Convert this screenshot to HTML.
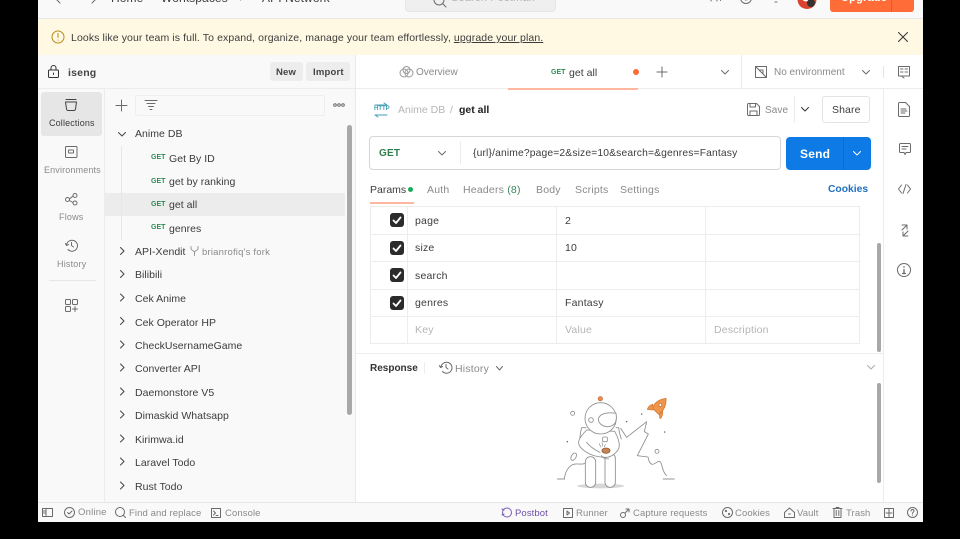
<!DOCTYPE html>
<html><head><meta charset="utf-8"><style>
html,body{margin:0;padding:0;width:960px;height:539px;overflow:hidden;background:#000}
body{font-family:"Liberation Sans",sans-serif;color:#3a3a3a}
.t{position:absolute;white-space:nowrap;font-size:10.5px;line-height:14px;margin-top:2px;transform:translateY(-50%);letter-spacing:.2px;color:#3c3c3c}
.s{letter-spacing:.03px;margin-top:3px}
.n{margin-top:3px}
.g{color:#8a8a8a}.l{color:#b5b5b5}
.f{font-size:9.5px;letter-spacing:.1px;margin-top:3px}
.b{position:absolute;background:#ededed}
.get{font-size:7px;font-weight:700;color:#2e8b57;letter-spacing:0;margin-top:3px}
svg{position:absolute;overflow:visible;fill:none;stroke:#6b6b6b;stroke-width:1;stroke-linecap:round;stroke-linejoin:round}
.cb{position:absolute;width:14px;height:14px;background:#2b2b2b;border-radius:3px}
.cb svg{left:0;top:0;stroke:#fff;stroke-width:1.8}
</style></head><body>
<div style="position:absolute;left:38px;top:0;width:885px;height:522px;background:#fff;overflow:hidden" id="r">
<div class="b" style="left:0;top:0;width:885px;height:19px;background:#f9f9f9"></div>
<div class="b" style="left:0;top:18px;width:885px;height:1px;background:#e6e6e6"></div>
<div class="b" style="left:0;top:19px;width:885px;height:36px;background:#fff9e3"></div>
<div class="b" style="left:0;top:55px;width:318px;height:447px;background:#f9f9f9"></div>
<div class="b" style="left:0;top:88px;width:885px;height:1px;background:#ececec"></div>
<div class="b" style="left:317px;top:55px;width:1px;height:447px;background:#e9e9e9"></div>
<div class="b" style="left:66px;top:88px;width:1px;height:414px;background:#ececec"></div>
<div class="b" style="left:845px;top:89px;width:1px;height:413px;background:#ececec"></div>
<div class="b" style="left:703px;top:55px;width:1px;height:33px;background:#ececec"></div>
<div class="b" style="left:0;top:502px;width:885px;height:20px;background:#f9f9f9"></div>
<div class="b" style="left:0;top:502px;width:885px;height:1px;background:#e6e6e6"></div>
<div class="b" style="left:367px;top:0;width:151px;height:12px;box-sizing:border-box;background:#efefef;border-radius:0 0 4px 4px;border:1px solid #e6e6e6;border-top:0"></div>
<svg style="left:18px;top:-4px" width="6" height="8"><path d="M4 0L.5 3.500 4 7"/></svg>
<svg style="left:53px;top:-4px" width="6" height="8"><path d="M1 0l3.500 3.500L1 7"/></svg>
<span class="t" style="left:73px;top:-4px;font-size:12px;letter-spacing:.1px">Home</span>
<span class="t" style="left:123px;top:-4px;font-size:12px;letter-spacing:.1px">Workspaces</span>
<svg style="left:199px;top:-3px" width="7" height="5"><path d="M.5.500L3.500 3 6.500.500"/></svg>
<span class="t" style="left:224px;top:-4px;font-size:12px;letter-spacing:.1px">API Network</span>
<span class="t l" style="left:413px;top:-4px;font-size:11px">Search Postman</span>
<svg style="left:395px;top:-6px" width="14" height="14"><circle cx="6" cy="6" r="5"/><path d="M10 10l3 3"/></svg>
<svg style="left:672px;top:-5px" width="14" height="10"><path d="M1 6c1-5 5-5 6 0M8 3h5M10.500.5v5" /><circle cx="4" cy="-1" r="2.500"/></svg>
<svg style="left:702px;top:-6px" width="12" height="10"><circle cx="6" cy="4" r="5.500"/><circle cx="6" cy="4" r="2"/></svg>
<svg style="left:732px;top:-5px" width="12" height="10"><path d="M1.500 4.500c2-1 2-8 4.500-8s2.500 7 4.500 8zM5 7h2"/></svg>
<svg style="left:759px;top:-9px" width="20" height="20"><circle cx="10" cy="8.500" r="9.500" fill="#d9432f" stroke="none"/><circle cx="9" cy="6" r="4.500" fill="#fff" stroke="none"/><circle cx="14" cy="12" r="4" fill="#333" stroke="none"/></svg>
<div class="b" style="left:792px;top:-5px;width:84px;height:17px;background:#ff6c37;border-radius:3px"></div>
<div class="b" style="left:853px;top:0;width:1px;height:12px;background:#e25a28"></div>
<span class="t" style="left:803px;top:-4px;color:#fff;font-weight:700;font-size:11px">Upgrade</span>
<svg style="left:13px;top:30px;stroke:#b58a1b" width="14" height="14"><circle cx="7" cy="7" r="6"/><path d="M7 3.500v4M7 10v.3"/></svg>
<span class="t" style="left:33px;top:36px;font-size:10.5px;letter-spacing:.1px">Looks like your team is full. To expand, organize, manage your team effortlessly, <u>upgrade your plan.</u></span>
<svg style="left:860px;top:32px;stroke:#333" width="10" height="10"><path d="M.5.500l9 9M9.500.500l-9 9"/></svg>
<svg style="left:10px;top:65px;stroke:#333" width="12" height="13"><rect x=".5" y="5" width="10" height="7.500" rx="1"/><path d="M3 5V3a2.500 2.500 0 015 0v2M5.500 8v1.500"/></svg>
<span class="t n" style="left:30px;top:70px;font-weight:700;color:#444">iseng</span>
<div class="b" style="left:232px;top:62px;width:33px;height:19px;border-radius:3px"></div>
<div class="b" style="left:268px;top:62px;width:44px;height:19px;border-radius:3px"></div>
<span class="t n" style="left:238px;top:70px;font-weight:700;font-size:9.500px;color:#444">New</span>
<span class="t n" style="left:275px;top:70px;font-weight:700;font-size:9.500px;color:#444">Import</span>
<svg style="left:361px;top:66px;stroke:#999" width="15" height="12"><circle cx="5" cy="7" r="4"/><circle cx="10" cy="7" r="4"/><circle cx="7.500" cy="4" r="3.500"/></svg>
<span class="t g" style="left:378px;top:71px;font-size:10px;letter-spacing:0">Overview</span>
<div class="b" style="left:470px;top:88px;width:130px;height:2px;background:#ffb7a0"></div>
<span class="t get" style="left:513px;top:70px">GET</span>
<span class="t s" style="left:531px;top:70px">get all</span>
<div class="b" style="left:595px;top:69px;width:6px;height:6px;border-radius:50%;background:#ff6c37"></div>
<svg style="left:619px;top:67px" width="10" height="10"><path d="M5 0v10M0 5h10"/></svg>
<svg style="left:683px;top:70px" width="8" height="5"><path d="M.5.500L4 4 7.500.500"/></svg>
<svg style="left:717px;top:66px" width="12" height="12"><rect x=".5" y=".5" width="11" height="11"/><path d="M1 1l10 10M4 4h4v4"/></svg>
<span class="t g" style="left:736px;top:71px;font-size:10px;letter-spacing:0">No environment</span>
<svg style="left:824px;top:70px" width="8" height="5"><path d="M.5.500L4 4 7.500.500"/></svg>
<div class="b" style="left:845px;top:66px;width:1px;height:12px;background:#e3e3e3"></div>
<svg style="left:860px;top:66px" width="12" height="12"><rect x=".5" y=".5" width="11" height="9.500"/><path d="M2.500 3h2.500M7 3h2.500M2.500 6h2.500M7 6h2.500M4 10.500l2 1.500"/></svg>
<div class="b" style="left:3px;top:92px;width:61px;height:44px;background:#e6e6e6;border-radius:3px"></div>
<svg style="left:27px;top:99px;stroke:#444" width="12" height="12"><path d="M1 .5h10M.5 3h11l-1 7c0 1-1 1.500-1.500 1.500H3c-.5 0-1.500-.5-1.500-1.500z"/></svg>
<span class="t n" style="left:11px;top:120px;font-size:9px;letter-spacing:.15px">Collections</span>
<svg style="left:27px;top:146px" width="13" height="12"><rect x=".5" y=".5" width="11.500" height="11" rx="1"/><rect x="3.500" y="4" width="5" height="3" rx=".5"/></svg>
<span class="t g n" style="left:6px;top:167px;font-size:9px;letter-spacing:.15px">Environments</span>
<svg style="left:27px;top:193px" width="13" height="13"><circle cx="2.500" cy="6.500" r="2"/><circle cx="10" cy="2.500" r="2"/><circle cx="10" cy="10" r="2"/><path d="M4.500 6l3.500-3M4.500 7.500L8 9.500"/></svg>
<span class="t g n" style="left:21px;top:214px;font-size:9px">Flows</span>
<svg style="left:27px;top:239px" width="13" height="13"><path d="M1.500 6.500a5.500 5.500 0 111.500 4M.5 4.500l1 2 2-1M6.500 3.500v3l2 1.500"/></svg>
<span class="t g n" style="left:19px;top:261px;font-size:9px">History</span>
<div class="b" style="left:11px;top:280px;width:47px;height:1px;background:#e6e6e6"></div>
<svg style="left:27px;top:299px" width="13" height="13"><rect x=".5" y=".5" width="5" height="5" rx="1"/><rect x="7.500" y=".5" width="5" height="5" rx="1"/><rect x=".5" y="7.500" width="5" height="5" rx="1"/><path d="M10 7.500v5M7.500 10h5"/></svg>
<svg style="left:78px;top:100px" width="11" height="11"><path d="M5.500 0v11M0 5.500h11"/></svg>
<div class="b" style="left:97px;top:95px;width:190px;height:21px;box-sizing:border-box;background:#f9f9f9;border:1px solid #eee;border-radius:2px"></div>
<svg style="left:107px;top:100px" width="12" height="11"><path d="M0 .5h12M2 3.500h8M3.500 6.500h5M5 9.500h2"/></svg>
<svg style="left:295px;top:103px" width="12" height="4"><circle cx="2" cy="2" r="1.300"/><circle cx="6" cy="2" r="1.300"/><circle cx="10" cy="2" r="1.300"/></svg>
<div class="b" style="left:67px;top:193px;width:240px;height:23px;background:#ececec"></div>
<div class="b" style="left:309px;top:125px;width:5px;height:290px;background:#a8a8a8;border-radius:2.500px"></div>
<div class="b" style="left:83px;top:146px;width:1px;height:94px;background:#e6e6e6"></div>
<svg style="left:80px;top:132px;stroke:#444" width="8" height="5"><path d="M.5.500L4 4 7.500.500"/></svg>
<span class="t s" style="left:97px;top:131px">Anime DB</span>
<span class="t get" style="left:113px;top:155px">GET</span><span class="t s" style="left:131px;top:156px">Get By ID</span>
<span class="t get" style="left:113px;top:179px">GET</span><span class="t s" style="left:131px;top:179px">get by ranking</span>
<span class="t get" style="left:113px;top:202px">GET</span><span class="t s" style="left:131px;top:202px">get all</span>
<span class="t get" style="left:113px;top:225px">GET</span><span class="t s" style="left:131px;top:226px">genres</span>
<span class="t s" style="left:97px;top:249px">API-Xendit</span>
<svg style="left:152px;top:246px;stroke:#999" width="9" height="10"><path d="M1 .5v2c0 2 3.500 2 3.500 4v3M8 .5v2c0 2-3.500 2-3.500 4"/></svg>
<span class="t g n" style="left:164px;top:250px;font-size:9.500px">brianrofiq's fork</span>
<span class="t s" style="left:97px;top:272px">Bilibili</span>
<span class="t s" style="left:97px;top:296px">Cek Anime</span>
<span class="t s" style="left:97px;top:320px">Cek Operator HP</span>
<span class="t s" style="left:97px;top:343px">CheckUsernameGame</span>
<span class="t s" style="left:97px;top:366px">Converter API</span>
<span class="t s" style="left:97px;top:390px">Daemonstore V5</span>
<span class="t s" style="left:97px;top:413px">Dimaskid Whatsapp</span>
<span class="t s" style="left:97px;top:437px">Kirimwa.id</span>
<span class="t s" style="left:97px;top:460px">Laravel Todo</span>
<span class="t s" style="left:97px;top:484px">Rust Todo</span>
<svg style="left:82px;top:247px;stroke:#444" width="5" height="240"><path d="M.5.500L4 4 .5 7.500M.5 23.500L4 27 .5 30.500M.5 47L4 50.500 .5 54M.5 70.500L4 74 .5 77.500M.5 94L4 97.500 .5 101M.5 117L4 120.500 .5 124M.5 141L4 144.500 .5 148M.5 164L4 167.500 .5 171M.5 188L4 191.500 .5 195M.5 211L4 214.500 .5 218M.5 235L4 238.500 .5 242"/></svg>
<svg style="left:336px;top:103px;stroke:#3f9fb5" width="14" height="14"><path d="M1 2h12M10 0l3 2M1 12h12M1 12l3 2"/></svg>
<span class="t" style="left:336px;top:107px;font-size:6px;font-weight:700;color:#3f9fb5;letter-spacing:0">HTTP</span>
<span class="t l n" style="left:360px;top:107px;letter-spacing:0">Anime DB</span>
<span class="t l n" style="left:412px;top:107px">/</span>
<span class="t n" style="left:421px;top:107px;font-weight:700;color:#222;letter-spacing:0">get all</span>
<svg style="left:709px;top:103px" width="13" height="13"><path d="M.5 1.500a1 1 0 011-1h8l3 3v8a1 1 0 01-1 1h-10a1 1 0 01-1-1zM3 .5v3.500h5.500V.5M3 12.500V8h7v4.500"/></svg>
<span class="t g n" style="left:727px;top:108px;font-size:10px;letter-spacing:.1px">Save</span>
<div class="b" style="left:756px;top:96px;width:1px;height:27px;background:#ececec"></div>
<svg style="left:763px;top:107px;stroke:#333" width="8" height="5"><path d="M.5.500L4 4 7.500.500"/></svg>
<div class="b" style="left:784px;top:96px;width:48px;height:27px;box-sizing:border-box;background:#fff;border:1px solid #e3e3e3;border-radius:3px"></div>
<span class="t n" style="left:794px;top:107px;font-size:10.500px;letter-spacing:.1px">Share</span>
<svg style="left:860px;top:102px" width="12" height="15"><path d="M.5 1.500a1 1 0 011-1h6l4 4v9a1 1 0 01-1 1h-9a1 1 0 01-1-1zM3 7h5M3 9h6M3 11h4"/></svg>
<div class="b" style="left:331px;top:136px;width:412px;height:34px;box-sizing:border-box;background:#fff;border:1.5px solid #d6d6d6;border-radius:4px"></div>
<div class="b" style="left:422px;top:141px;width:1px;height:23px;background:#ececec"></div>
<span class="t" style="left:341px;top:152px;font-weight:700;font-size:10px;color:#2e7d4f">GET</span>
<svg style="left:400px;top:151px" width="8" height="5"><path d="M.5.500L4 4 7.500.500"/></svg>
<span class="t" style="left:435px;top:152px;font-size:10.300px;letter-spacing:.15px">{url}/anime?page=2&amp;size=10&amp;search=&amp;genres=Fantasy</span>
<div class="b" style="left:748px;top:137px;width:85px;height:33px;background:#0e7ae6;border-radius:4px"></div>
<div class="b" style="left:805px;top:137px;width:1px;height:33px;background:#0b6dce"></div>
<span class="t" style="left:762px;top:152px;color:#fff;font-weight:700;font-size:12px">Send</span>
<svg style="left:815px;top:151px;stroke:#fff" width="8" height="5"><path d="M.5.500L4 4 7.500.500"/></svg>
<svg style="left:861px;top:143px" width="12" height="13"><path d="M1.500.5h9a1 1 0 011 1v7a1 1 0 01-1 1H7l-1 2-1-2H1.500a1 1 0 01-1-1v-7a1 1 0 011-1zM3 3.500h6M3 6h4"/></svg>
<svg style="left:860px;top:184px" width="13" height="10"><path d="M3.500 1L.5 5l3 4M9.500 1l3 4-3 4M8 .5L5 9.500"/></svg>
<svg style="left:862px;top:224px" width="10" height="13"><path d="M2 1h5v4M7 1L2 6M8 12H3V8M3 12l5-5"/></svg>
<svg style="left:859px;top:263px" width="14" height="14"><circle cx="7" cy="7" r="6.500"/><path d="M7 6.500v3.500M7 3.800v.4M5.500 10.500h3" stroke-width="1.300"/></svg>
<span class="t" style="left:332px;top:188px;letter-spacing:0">Params</span>
<div class="b" style="left:370px;top:187px;width:5px;height:5px;border-radius:50%;background:#1ea85e"></div>
<div class="b" style="left:332px;top:202px;width:44px;height:2px;background:#ffb7a0"></div>
<span class="t g" style="left:389px;top:188px">Auth</span>
<span class="t g" style="left:425px;top:188px">Headers <b style="color:#3a8a5c;font-weight:400">(8)</b></span>
<span class="t g" style="left:498px;top:188px">Body</span>
<span class="t g" style="left:537px;top:188px">Scripts</span>
<span class="t g" style="left:582px;top:188px">Settings</span>
<span class="t" style="left:790px;top:188px;color:#1f6fc0;font-weight:700;font-size:10.300px;letter-spacing:0">Cookies</span>
<div style="position:absolute;left:332px;top:206px;width:490px;height:138px;box-sizing:border-box;border:1px solid #ececec"></div>
<div class="b" style="left:332px;top:234px;width:490px;height:1px"></div>
<div class="b" style="left:332px;top:261px;width:490px;height:1px"></div>
<div class="b" style="left:332px;top:289px;width:490px;height:1px"></div>
<div class="b" style="left:332px;top:316px;width:490px;height:1px"></div>
<div class="b" style="left:369px;top:206px;width:1px;height:138px"></div>
<div class="b" style="left:518px;top:206px;width:1px;height:138px"></div>
<div class="b" style="left:667px;top:206px;width:1px;height:138px"></div>
<div class="b" style="left:318px;top:353px;width:527px;height:1px"></div>
<div class="cb" style="left:352px;top:213px"><svg width="14" height="14"><path d="M3.500 7.500l2.500 2.500 4.500-5.500"/></svg></div>
<div class="cb" style="left:352px;top:241px"><svg width="14" height="14"><path d="M3.500 7.500l2.500 2.500 4.500-5.500"/></svg></div>
<div class="cb" style="left:352px;top:268px"><svg width="14" height="14"><path d="M3.500 7.500l2.500 2.500 4.500-5.500"/></svg></div>
<div class="cb" style="left:352px;top:296px"><svg width="14" height="14"><path d="M3.500 7.500l2.500 2.500 4.500-5.500"/></svg></div>
<span class="t" style="left:377px;top:219px">page</span><span class="t" style="left:527px;top:219px">2</span>
<span class="t" style="left:377px;top:246px">size</span><span class="t" style="left:527px;top:246px">10</span>
<span class="t" style="left:377px;top:274px">search</span>
<span class="t" style="left:377px;top:301px">genres</span><span class="t" style="left:527px;top:301px">Fantasy</span>
<span class="t l" style="left:377px;top:328px">Key</span><span class="t l" style="left:527px;top:328px">Value</span><span class="t l" style="left:676px;top:328px">Description</span>
<span class="t" style="left:332px;top:367px;font-weight:700;font-size:10px;letter-spacing:0;color:#333">Response</span>
<div class="b" style="left:386px;top:362px;width:1px;height:12px"></div>
<svg style="left:401px;top:361px" width="14" height="13"><path d="M2 6.500a5.500 5.500 0 111.500 4M.5 4.500l1 2 2-1M7 3.500v3l2 1.500"/></svg>
<span class="t g" style="left:417px;top:367px">History</span>
<svg style="left:458px;top:366px" width="7" height="5"><path d="M.5.500L3.500 4 6.500.500"/></svg>
<svg style="left:829px;top:365px;stroke:#aaa" width="8" height="5"><path d="M.5.500L4 4 7.500.500"/></svg>
<div class="b" style="left:839px;top:243px;width:4px;height:109px;background:#a8a8a8;border-radius:2px"></div>
<div class="b" style="left:839px;top:383px;width:4px;height:100px;background:#a8a8a8;border-radius:2px"></div>
<svg style="left:492px;top:385px;stroke:#8f8f8f;stroke-width:2.600" width="170" height="115" viewBox="0 0 510 345">
<ellipse cx="212" cy="303" rx="71" ry="7" fill="#d6d6d6" stroke="none"/>
<path d="M83 282h20M400 282h32" stroke="#aaa" stroke-width="4"/>
<path d="M103 282c3-28 18-46 38-45 10 0 18 2 26-3"/>
<path d="M272 130l18 27 60-47-7 30 12 7-33 65 32 4c2 12 6 20 12 22 12 0 16-12 24-8 8 5 5 30 20 42"/>
<path d="M168 128h-13c-4 15-6 28-5 42M258 128h8c2 14 4 24 8 34" fill="#fff"/>
<rect x="166" y="215" width="31" height="92" rx="15" fill="#fff"/>
<rect x="225" y="205" width="31" height="102" rx="15" fill="#fff"/>
<path d="M170 135c-14 14-26 28-24 40 2 16 28 32 50 38 12 3 26 4 32 4 16 0 32-14 38-26 6-14-4-38-12-52z" fill="#fff"/>
<path d="M170 172c10 14 28 24 40 30M214 212c4 6 12 10 22 10"/>
<circle cx="212" cy="100" r="47" fill="#fff"/>
<path d="M205 102c3-14 22-22 53-17 2 10 1 22-3 30-8 9-20 12-30 9-12-3-20-12-20-22z" fill="#fff"/>
<circle cx="183" cy="105" r="7"/><circle cx="128" cy="85" r="6"/><circle cx="381" cy="199" r="6"/>
<ellipse cx="131" cy="215" rx="7" ry="12" transform="rotate(30 131 215)"/>
<rect x="218" y="156" width="14" height="14" rx="3"/>
<path d="M208 176l4 10M216 172l2 12M226 178l-3 8" stroke-width="2"/>
<circle cx="211" cy="41" r="6.500" fill="#ec8a50" stroke="#c77a45"/>
<ellipse cx="228" cy="197" rx="12" ry="8" fill="#c98250" stroke="#8c5b38"/>
<path d="M368 70c4-16 16-26 40-30 1 22-6 36-22 48z" fill="#f09649" stroke="#d27e3c"/>
<path d="M368 58c-8 2-13 7-16 15l18 2zM388 88l2 13c5-3 9-12 8-22z" fill="#f09649" stroke="#d27e3c"/>
<circle cx="391" cy="60" r="4.500" fill="#fff" stroke="#c77a45"/>
<g fill="#666" stroke="none"><circle cx="112" cy="170" r="2.300"/><circle cx="290" cy="110" r="2.300"/><circle cx="335" cy="87" r="2.300"/><circle cx="404" cy="141" r="2.300"/></g>
</svg>
<svg style="left:4px;top:508px" width="11" height="9"><rect x=".5" y=".5" width="10" height="8"/><path d="M4 .5v8M1.500 3h1.500M1.500 5h1.500"/></svg>
<svg style="left:26px;top:507px" width="11" height="11"><circle cx="5.500" cy="5.500" r="5"/><path d="M3.500 5.500l1.500 1.500 3-3"/></svg>
<span class="t g f" style="left:40px;top:510px;letter-spacing:.2px">Online</span>
<svg style="left:77px;top:507px" width="11" height="11"><circle cx="5" cy="5" r="4.500"/><path d="M8.500 8.500l2 2"/></svg>
<span class="t g f" style="left:91px;top:511px">Find and replace</span>
<svg style="left:173px;top:508px" width="10" height="10"><rect x=".5" y=".5" width="9" height="9"/><path d="M2.500 3l2 2-2 2M5 7.500h2"/></svg>
<span class="t g f" style="left:187px;top:511px">Console</span>
<svg style="left:463px;top:507px;stroke:#7a5bb5" width="11" height="11"><circle cx="6" cy="5.500" r="4.500"/><path d="M1 2l2 1M1 8l2-1"/></svg>
<span class="t f" style="left:477px;top:511px;color:#6f4fa8">Postbot</span>
<svg style="left:525px;top:508px" width="10" height="10"><rect x=".5" y=".5" width="9" height="9"/><path d="M4 3l2.500 2L4 7z"/></svg>
<span class="t g f" style="left:538px;top:511px">Runner</span>
<svg style="left:582px;top:508px" width="10" height="10"><circle cx="3" cy="7" r="2.500"/><path d="M5 5l3-3M6 1h3v3"/></svg>
<span class="t g f" style="left:595px;top:511px">Capture requests</span>
<svg style="left:684px;top:507px" width="11" height="11"><circle cx="5.500" cy="5.500" r="5"/><circle cx="4" cy="4" r=".6"/><circle cx="7" cy="7" r=".6"/></svg>
<span class="t g f" style="left:697px;top:511px">Cookies</span>
<svg style="left:746px;top:507px" width="11" height="11"><path d="M.5 10.500v-5L5.500 1l5 4.500v5zM4.500 7h2"/></svg>
<span class="t g f" style="left:759px;top:511px">Vault</span>
<svg style="left:795px;top:507px" width="9" height="11"><path d="M0 1.500h9M3 .5h3M1 1.500v9h7v-9M3.200 3.500v5M5.800 3.500v5"/></svg>
<span class="t g f" style="left:808px;top:511px">Trash</span>
<svg style="left:846px;top:508px" width="10" height="10"><rect x=".5" y=".5" width="9" height="9"/><path d="M5 .5v9M2 5h6"/></svg>
<svg style="left:869px;top:507px" width="11" height="11"><circle cx="5.500" cy="5.500" r="5"/><path d="M4 4c0-2 3-2 3 0 0 1-1.500 1-1.500 2.500M5.500 8v.3"/></svg>
</div>
</body></html>
